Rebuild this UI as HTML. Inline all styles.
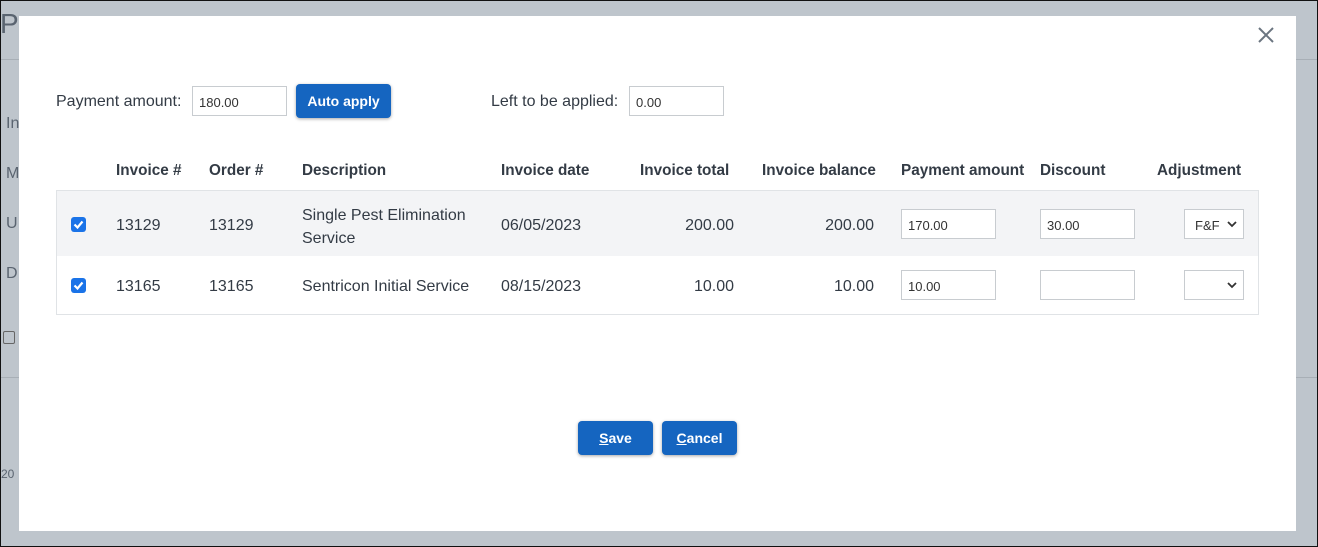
<!DOCTYPE html><html><head><style>
*{box-sizing:border-box;margin:0;padding:0}
body{width:1318px;height:547px;background:#bec5cc;position:relative;overflow:hidden;font-family:"Liberation Sans",sans-serif;color:#333b45}
.frame{position:absolute;left:0;top:0;width:1318px;height:547px;border:1px solid #111;z-index:5;pointer-events:none}
.a{position:absolute;white-space:nowrap}
.bg{color:#5a6470;font-size:16px}
.m{position:absolute;left:19px;top:16px;width:1277px;height:515px;background:#fff}
.inp{position:absolute;border:1px solid #c8ccd0;background:#fff;font-size:13px;padding:8px 6px 0;color:#333;height:30px}
.btn{position:absolute;background:#1565c0;color:#fff;font-weight:bold;font-size:14px;border-radius:4px;text-align:center;box-shadow:0 1px 3px rgba(0,0,0,.35)}
.h{font-weight:bold;font-size:15.3px;color:#333b45}
.t{font-size:16px;color:#333b45}
.cb{position:absolute;width:15px;height:15px;background:#1a73e8;border-radius:3px}
</style></head><body>
<div class="frame"></div>
<div class="a bg" style="left:0;top:8px;font-size:28px">P</div>
<div style="position:absolute;left:0;top:59px;width:1318px;height:1px;background:#a8afb6"></div>
<div style="position:absolute;left:0;top:377px;width:1318px;height:1px;background:#a8afb6"></div>
<div class="a bg" style="left:6px;top:115px">In</div>
<div class="a bg" style="left:6px;top:165px">M</div>
<div class="a bg" style="left:6px;top:215px">U</div>
<div class="a bg" style="left:6px;top:265px">D</div>
<div style="position:absolute;left:3px;top:331px;width:12px;height:13px;border:1.5px solid #666;border-radius:2px"></div>
<div class="a bg" style="left:1px;top:467px;font-size:12px">20</div>
<div class="m">
<svg style="position:absolute;left:1239px;top:11px" width="16" height="16"><path d="M1 1L15 15M15 1L1 15" stroke="#6b7580" stroke-width="2"/></svg>
<div class="a t" style="left:37px;top:77px">Payment amount:</div>
<div class="inp" style="left:173px;top:70px;width:95px">180.00</div>
<div class="btn" style="left:277px;top:68px;width:95px;height:34px;line-height:35px">Auto apply</div>
<div class="a t" style="left:472px;top:77px">Left to be applied:</div>
<div class="inp" style="left:610px;top:70px;width:95px">0.00</div>
<div class="a h" style="left:97px;top:146px">Invoice #</div>
<div class="a h" style="left:190px;top:146px">Order #</div>
<div class="a h" style="left:283px;top:146px">Description</div>
<div class="a h" style="left:482px;top:146px">Invoice date</div>
<div class="a h" style="left:621px;top:146px">Invoice total</div>
<div class="a h" style="left:743px;top:146px">Invoice balance</div>
<div class="a h" style="left:882px;top:146px">Payment amount</div>
<div class="a h" style="left:1021px;top:146px">Discount</div>
<div class="a h" style="left:1138px;top:146px">Adjustment</div>
<div style="position:absolute;left:37px;top:174px;width:1203px;height:125px;border:1px solid #e0e3e6"></div>
<div style="position:absolute;left:38px;top:175px;width:1201px;height:65px;background:#f3f4f6"></div>
<div class="cb" style="left:52px;top:201px"><svg width="15" height="15"><path d="M3.5 7.5l3 3 5-6" stroke="#fff" stroke-width="2.2" fill="none"/></svg></div>
<div class="a t" style="left:97px;top:201px">13129</div>
<div class="a t" style="left:190px;top:201px">13129</div>
<div class="a t" style="left:283px;top:188px;line-height:23px">Single Pest Elimination<br>Service</div>
<div class="a t" style="left:482px;top:201px">06/05/2023</div>
<div class="a t" style="right:562px;top:201px">200.00</div>
<div class="a t" style="right:422px;top:201px">200.00</div>
<div class="inp" style="left:882px;top:193px;width:95px">170.00</div>
<div class="inp" style="left:1021px;top:193px;width:95px">30.00</div>
<div class="inp" style="left:1165px;top:193px;width:60px;padding-left:10px">F&amp;F<svg style="position:absolute;right:6px;top:11px" width="10" height="7"><path d="M1 1l4 4 4-4" stroke="#333" stroke-width="1.8" fill="none"/></svg></div>
<div class="cb" style="left:52px;top:262px"><svg width="15" height="15"><path d="M3.5 7.5l3 3 5-6" stroke="#fff" stroke-width="2.2" fill="none"/></svg></div>
<div class="a t" style="left:97px;top:262px">13165</div>
<div class="a t" style="left:190px;top:262px">13165</div>
<div class="a t" style="left:283px;top:262px">Sentricon Initial Service</div>
<div class="a t" style="left:482px;top:262px">08/15/2023</div>
<div class="a t" style="right:562px;top:262px">10.00</div>
<div class="a t" style="right:422px;top:262px">10.00</div>
<div class="inp" style="left:882px;top:254px;width:95px">10.00</div>
<div class="inp" style="left:1021px;top:254px;width:95px"></div>
<div class="inp" style="left:1165px;top:254px;width:60px"><svg style="position:absolute;right:6px;top:11px" width="10" height="7"><path d="M1 1l4 4 4-4" stroke="#333" stroke-width="1.8" fill="none"/></svg></div>
<div class="btn" style="left:559px;top:405px;width:75px;height:34px;line-height:35px"><u>S</u>ave</div>
<div class="btn" style="left:643px;top:405px;width:75px;height:34px;line-height:35px"><u>C</u>ancel</div>
</div>
</body></html>
